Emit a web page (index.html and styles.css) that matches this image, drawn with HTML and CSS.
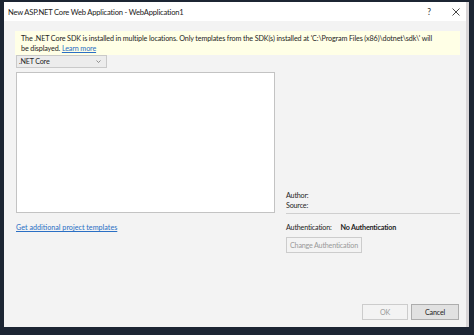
FILE: index.html
```html
<!DOCTYPE html>
<html>
<head>
<meta charset="utf-8">
<link rel="stylesheet" href="styles.css">
</head>
<body>
<div class="dialog">
  <div class="titlebar">
    <span class="title">New ASP.NET Core Web Application - WebApplication1</span>
    <span class="tb-btn help">?</span>
    <span class="tb-btn close">
      <svg width="8" height="8" viewBox="0 0 8 8"><path d="M0.5 0.5L7.5 7.5M7.5 0.5L0.5 7.5" stroke="#333" stroke-width="0.9" fill="none"/></svg>
    </span>
  </div>
  <div class="content">
    <div class="banner">The .NET Core SDK is installed in multiple locations. Only templates from the SDK(s) installed at 'C:\Program Files (x86)\dotnet\sdk\' will<br>be displayed. <a class="link" href="#">Learn more</a></div>
    <div class="select"><span>.NET Core</span><svg width="5" height="3" viewBox="0 0 5 3"><path d="M0.5 0.5L2.5 2.5L4.5 0.5" stroke="#777" stroke-width="0.8" fill="none"/></svg></div>
    <div class="main">
      <div class="left">
        <div class="listbox"></div>
        <a class="link more" href="#">Get additional project templates</a>
      </div>
      <div class="right">
        <div class="meta">
          <div>Author:</div>
          <div>Source:</div>
        </div>
        <div class="auth"><span>Authentication:</span><b>No Authentication</b></div>
        <div class="btn change">Change Authentication</div>
      </div>
    </div>
  </div>
  <div class="footer">
    <div class="btn ok">OK</div>
    <div class="btn cancel">Cancel</div>
  </div>
</div>
</body>
</html>
```
FILE: styles.css
```css
html, body {
  margin: 0;
  padding: 0;
}
body {
  background: #1c2533;
  width: 474px;
  height: 335px;
  overflow: hidden;
  font-family: Lato, "Open Sans", sans-serif;
  font-size: 7.2px;
  letter-spacing: -0.2px;
  color: #1e1e1e;
}
.dialog {
  margin: 2px 0 0 4px;
  width: 462px;
  height: 325px;
  background: #f3f3f3;
  display: flex;
  flex-direction: column;
  box-shadow: 3px 0 0 #d9d6d8;
}
.titlebar {
  height: 19px;
  background: #ffffff;
  display: flex;
  align-items: center;
  padding: 1px 0 0 4px;
  box-sizing: border-box;
  flex-shrink: 0;
}
.title {
  font-size: 7.6px;
  letter-spacing: -0.2px;
  color: #222;
  flex: 1;
  white-space: nowrap;
}
.tb-btn {
  display: flex;
  align-items: center;
  justify-content: center;
  font-size: 8.5px;
  color: #333;
}
.help { width: 10px; margin-right: 17px; }
.close { width: 10px; margin-right: 5px; }
.content {
  padding: 10px 6px 0 11px;
  flex: 1;
  display: flex;
  flex-direction: column;
}
.banner {
  background: #ffffe6;
  padding: 3px 6px 1px 6px;
  line-height: 10px;
  height: 20px;
  white-space: nowrap;
  letter-spacing: -0.13px;
}
.link {
  color: #2a6fc4;
  text-decoration: underline;
}
.select {
  margin-left: 1px;
  height: 11px;
  border: 1px solid #c9c9c9;
  background: #ececec;
  display: flex;
  align-items: center;
  justify-content: space-between;
  padding: 0 5px 0 2px;
  width: 82px;
}
.main {
  display: flex;
  gap: 11px;
  margin-top: 4px;
}
.left {
  display: flex;
  flex-direction: column;
  margin-left: 1px;
}
.listbox {
  width: 257px;
  height: 139px;
  border: 1px solid #c3c3c3;
  background: #ffffff;
}
.more {
  margin-top: 10px;
  line-height: 10px;
  letter-spacing: 0;
  white-space: nowrap;
}
.right {
  flex: 1;
  display: flex;
  flex-direction: column;
  padding-top: 119px;
}
.meta {
  line-height: 10px;
  border-bottom: 1px solid #cfcfcf;
  padding-bottom: 2px;
}
.auth {
  margin-top: 9px;
  line-height: 10px;
  display: flex;
  gap: 9px;
  white-space: nowrap;
}
.auth b { font-weight: 700; }
.btn {
  display: flex;
  align-items: center;
  justify-content: center;
  box-sizing: border-box;
  height: 16px;
  border: 1px solid #cccccc;
  background: #f3f3f3;
  color: #9a9a9a;
  white-space: nowrap;
}
.change {
  margin-top: 4px;
  width: 76px;
}
.footer {
  display: flex;
  justify-content: flex-end;
  gap: 3px;
  padding: 0 7px 7px 0;
}
.ok { width: 46px; }
.cancel {
  width: 48px;
  background: #e1e1e1;
  border-color: #adadad;
  color: #1e1e1e;
}
```
